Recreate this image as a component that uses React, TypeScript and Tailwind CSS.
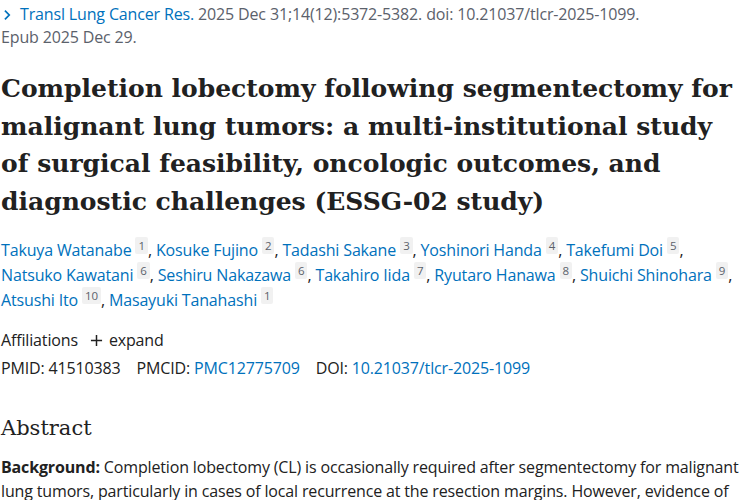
import React from 'react';

const authors: { name: string; aff: string }[] = [
  { name: 'Takuya Watanabe', aff: '1' },
  { name: 'Kosuke Fujino', aff: '2' },
  { name: 'Tadashi Sakane', aff: '3' },
  { name: 'Yoshinori Handa', aff: '4' },
  { name: 'Takefumi Doi', aff: '5' },
  { name: 'Natsuko Kawatani', aff: '6' },
  { name: 'Seshiru Nakazawa', aff: '6' },
  { name: 'Takahiro Iida', aff: '7' },
  { name: 'Ryutaro Hanawa', aff: '8' },
  { name: 'Shuichi Shinohara', aff: '9' },
  { name: 'Atsushi Ito', aff: '10' },
  { name: 'Masayuki Tanahashi', aff: '1' },
];

const App: React.FC = () => {
  return (
    <div className="min-h-[500px] bg-white text-[#212121] font-['Open_Sans','Lato',sans-serif] text-[16px] tracking-[-0.15px] pl-[1px] pr-[4px] overflow-hidden">
      {/* citation */}
      <div className="pt-[3px] leading-[23px] text-[#5b616b]">
        <a className="text-[#0071bc] inline-flex items-baseline">
          <svg viewBox="0 0 10 14" className="w-[9px] h-[12px] mr-[8px] ml-[2px] self-center" fill="none" stroke="#0071bc" strokeWidth="2">
            <path d="M2 2l5 5-5 5" />
          </svg>
          Transl Lung Cancer Res.
        </a>{' '}
        2025 Dec 31;14(12):5372-5382. doi: 10.21037/tlcr-2025-1099.
        <span className="block">Epub 2025 Dec 29.</span>
      </div>

      <h1 className="mt-[21px] font-['DejaVu_Serif',serif] font-bold text-[25px] leading-[37.5px] tracking-normal text-[#212121]">
        Completion lobectomy following segmentectomy for malignant lung tumors: a multi-institutional study
        of surgical feasibility, oncologic outcomes, and diagnostic challenges (ESSG-02 study)
      </h1>

      <div className="mt-[18px] leading-[25px]">
        {authors.map((a, i) => (
          <React.Fragment key={i}>
            <span className="whitespace-nowrap">
              <a className="text-[#0071bc]">{a.name}</a>
              <span className="relative top-[-6px] ml-[4px] text-[11.5px] leading-none text-[#5b616b] bg-[#f1f1f1] px-[3px] py-[1px] rounded-[2px]">
                {a.aff}
              </span>
              {i < authors.length - 1 ? ',' : ''}
            </span>{' '}
          </React.Fragment>
        ))}
      </div>

      <div className="mt-[15px] leading-[24px] flex items-center">
        <span>Affiliations</span>
        <span className="ml-[12px] flex items-center text-[#212121]">
          <svg viewBox="0 0 14 14" className="w-[13px] h-[13px] mr-[6px]" stroke="#212121" strokeWidth="1.6">
            <path d="M7 1v12M1 7h12" />
          </svg>
          expand
        </span>
      </div>

      <div className="mt-[4px] leading-[24px] flex gap-[16px]">
        <span>PMID: 41510383</span>
        <span>
          PMCID: <a className="text-[#0071bc]">PMC12775709</a>
        </span>
        <span>
          DOI: <a className="text-[#0071bc]">10.21037/tlcr-2025-1099</a>
        </span>
      </div>

      <h2 className="mt-[33px] font-['DejaVu_Serif',serif] font-normal text-[21px] leading-[30px] tracking-normal text-[#212121]">
        Abstract
      </h2>

      <p className="mt-[12px] leading-[24px]">
        <strong className="font-bold">Background:</strong> Completion lobectomy (CL) is occasionally required after
        segmentectomy for malignant lung tumors, particularly in cases of local recurrence at the resection margins.
        However, evidence of its surgical feasibility and oncologic outcomes remains limited.
      </p>
    </div>
  );
};

export default App;
